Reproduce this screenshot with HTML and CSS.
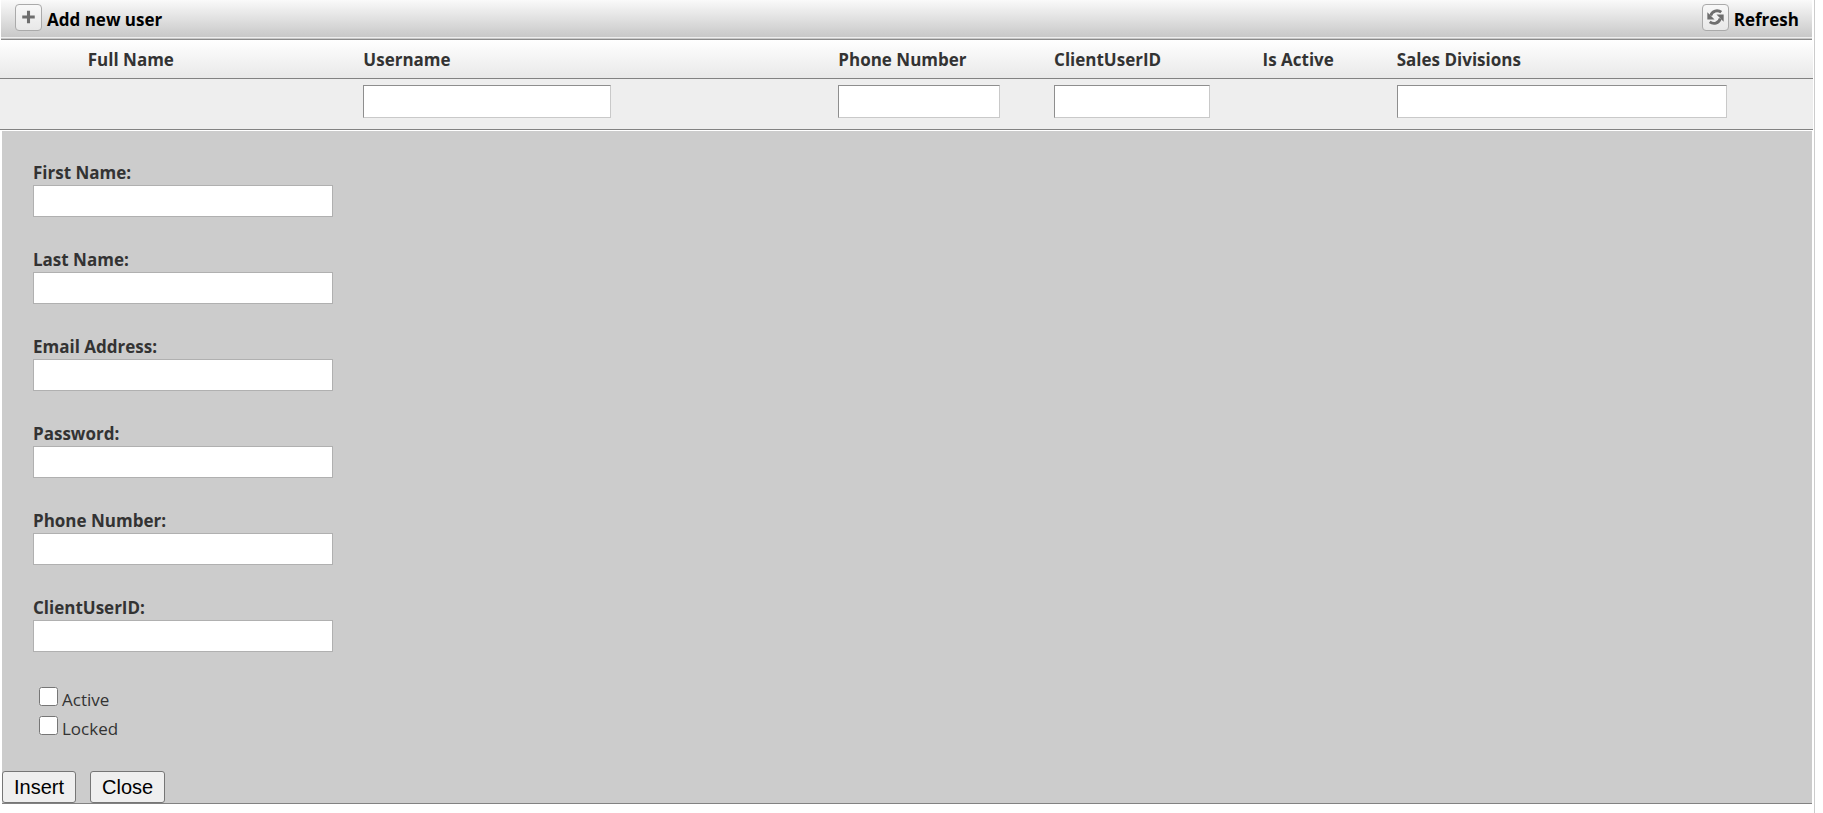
FILE: index.html
```html
<!DOCTYPE html>
<html lang="en">
<head>
    <meta charset="UTF-8">
    <meta name="viewport" content="width=device-width, initial-scale=1.0">
    <title>Users</title>
    <link rel="stylesheet" href="styles.css">
</head>
<body>
    <div class="grid">
        <div class="toolbar">
            <button type="button" class="command">
                <svg class="icon" viewBox="0 0 26 26" aria-hidden="true">
                    <path d="M13 6v13M6.500 12.500h13" fill="none" stroke="#6e6e6e" stroke-width="3.200"/>
                </svg>
                Add new user
            </button>
            <button type="button" class="command">
                <svg class="icon" viewBox="0 0 26 26" aria-hidden="true">
                    <path d="M19 7.500C15 4.500 9.500 6 8 11M7 17.500C11 20.500 16.500 19 18 14" fill="none" stroke="#6e6e6e" stroke-width="3"/>
                    <path d="M4.500 7.500v7.500h7.500zM21.500 17.500v-7.500h-7.500z" fill="#6e6e6e"/>
                </svg>
                Refresh
            </button>
        </div>
        <table class="users">
            <colgroup>
                <col class="col-edit">
                <col class="col-name">
                <col class="col-username">
                <col class="col-phone">
                <col class="col-client">
                <col class="col-active">
                <col class="col-sales">
            </colgroup>
            <thead>
                <tr class="heading">
                    <th></th>
                    <th>Full Name</th>
                    <th>Username</th>
                    <th>Phone Number</th>
                    <th>ClientUserID</th>
                    <th>Is Active</th>
                    <th>Sales Divisions</th>
                </tr>
            </thead>
            <tbody>
                <tr class="filters">
                    <td></td>
                    <td></td>
                    <td><input type="text" class="filter filter-username" aria-label="Username"></td>
                    <td><input type="text" class="filter" aria-label="Phone Number"></td>
                    <td><input type="text" class="filter" aria-label="ClientUserID"></td>
                    <td></td>
                    <td><input type="text" class="filter" aria-label="Sales Divisions"></td>
                </tr>
            </tbody>
        </table>
        <form class="edit-form">
            <div class="fields">
                <div class="form-group">
                    <label for="firstName">First Name:</label>
                    <input type="text" id="firstName">
                </div>
                <div class="form-group">
                    <label for="lastName">Last Name:</label>
                    <input type="text" id="lastName">
                </div>
                <div class="form-group">
                    <label for="email">Email Address:</label>
                    <input type="email" id="email">
                </div>
                <div class="form-group">
                    <label for="password">Password:</label>
                    <input type="password" id="password">
                </div>
                <div class="form-group">
                    <label for="phone">Phone Number:</label>
                    <input type="text" id="phone">
                </div>
                <div class="form-group">
                    <label for="clientUserId">ClientUserID:</label>
                    <input type="text" id="clientUserId">
                </div>
                <div class="check">
                    <input type="checkbox" id="active">
                    <label for="active">Active</label>
                </div>
                <div class="check">
                    <input type="checkbox" id="locked">
                    <label for="locked">Locked</label>
                </div>
            </div>
            <div class="actions">
                <button type="submit" class="btn">Insert</button>
                <button type="button" class="btn">Close</button>
            </div>
        </form>
    </div>
</body>
</html>
```

FILE: styles.css
```css
* {
    box-sizing: border-box;
}
body {
    margin: 0;
    background: #fff;
    color: #333;
    font-family: "Segoe UI", "Open Sans", sans-serif;
    font-size: 17px;
    line-height: 24px;
}
.grid {
    min-height: 100vh;
    margin-right: 8px;
    padding-right: 1px;
    border-right: 1px solid #ccc;
}
.toolbar {
    display: flex;
    justify-content: space-between;
    height: 40px;
    margin: 0 1px;
    padding: 4px 13px 0 14px;
    background: linear-gradient(#fafafa, #c8c8c8 37px, #eee 37px, #eee 38px, #c8c8c8 38px);
    border-bottom: 1px solid #8a8a8a;
}
.command {
    display: flex;
    align-items: flex-start;
    gap: 5px;
    padding: 0;
    border: none;
    background: none;
    color: #000;
    font-family: inherit;
    font-size: 17px;
    font-weight: bold;
    line-height: 31px;
    cursor: pointer;
}
.icon {
    width: 27px;
    height: 27px;
    background: linear-gradient(#f8f8f8, #e8e8e8);
    border: 1px solid #aaa;
    border-radius: 4px;
}
.users {
    width: 100%;
    table-layout: fixed;
    border-collapse: separate;
    border-spacing: 0;
}
.col-edit {
    width: 4.4%;
}
.col-name {
    width: 15.2%;
}
.col-username {
    width: 26.2%;
}
.col-phone {
    width: 11.9%;
}
.col-client {
    width: 11.5%;
}
.col-active {
    width: 7.4%;
}
.users th,
.users td {
    padding: 0 8px;
    text-align: left;
    border-bottom: 1px solid #828282;
}
.users th {
    height: 39px;
    padding-top: 1px;
}
.heading {
    background: linear-gradient(#fff, #e8e8e8);
}
.filters {
    background: #eee;
}
.users td {
    height: 51px;
    padding-top: 6px;
    vertical-align: top;
}
.filter {
    display: block;
    width: 81%;
    height: 33px;
    padding: 4px;
    border: 1px solid;
    border-color: #8e8e8e #c9c9c9 #c9c9c9 #8e8e8e;
    font: inherit;
}
.filter-username {
    width: 54%;
}
.edit-form {
    margin: 1px 1px 0 2px;
    background: #ccc;
    border-bottom: 1px solid #828282;
}
.fields {
    padding: 30px 31px;
}
.form-group {
    margin-bottom: 31px;
}
.form-group label {
    display: block;
    font-weight: bold;
    line-height: 24px;
}
.form-group input {
    display: block;
    width: 300px;
    height: 32px;
    padding: 4px;
    border: 1px solid #b0b0b0;
    font: inherit;
}
.check {
    display: flex;
    gap: 4px;
    height: 29px;
    padding-left: 6px;
    line-height: 34px;
}
.check input {
    width: 19px;
    height: 19px;
    margin: 4px 0 0;
}
.actions {
    display: flex;
    gap: 14px;
}
.btn {
    height: 32px;
    padding: 0 11px;
    background: #efefef;
    border: 1px solid #767676;
    border-radius: 3px;
    color: #000;
    font-family: Arial, "Liberation Sans", sans-serif;
    font-size: 20px;
    cursor: pointer;
}
```
